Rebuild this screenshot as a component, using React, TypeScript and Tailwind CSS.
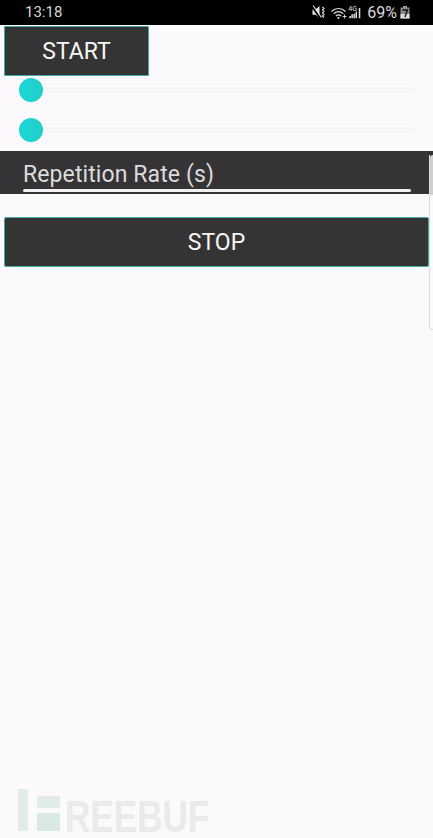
import React from 'react';

const font = "font-['Roboto','Liberation_Sans',sans-serif]";

function StatusIcons() {
  return (
    <div className="flex items-center">
      {/* muted */}
      <svg width="14" height="15" viewBox="0 0 14 15" className="mr-[4px]">
        <path d="M0.5 4.5h3L7.5 1v12L3.5 9.7H0.5z" fill="#e8e8e8" />
        <path d="M0 1.5l8.5 12" stroke="#000" strokeWidth="2" />
        <path d="M1 0.5l8.5 12" stroke="#e8e8e8" strokeWidth="1.1" />
        <path d="M10.5 2l1.5 1.5L10.5 5l1.5 1.5L10.5 8l1.5 1.5L10.5 11l1.5 1.5" stroke="#e8e8e8" strokeWidth="1.1" fill="none" />
      </svg>
      {/* wifi */}
      <svg width="18" height="14" viewBox="0 0 17 14">
        <path d="M1 5.5C5 1.5 11 1.5 15 5.5" stroke="#e0e0e0" strokeWidth="1.2" fill="none" />
        <path d="M3.2 7.8C6 5 10 5 12.8 7.8" stroke="#e0e0e0" strokeWidth="1.2" fill="none" />
        <path d="M5.4 10C7 8.4 9 8.4 10.6 10" stroke="#e0e0e0" strokeWidth="1.2" fill="none" />
        <circle cx="8" cy="12" r="1.1" fill="#e0e0e0" />
        <path d="M12 10.5h4M14 8.5v4" stroke="#e0e0e0" strokeWidth="0.9" />
      </svg>
      {/* 4G signal */}
      <div className="relative w-[14px] h-[14px] mr-[5px]">
        <span className="absolute left-0 top-[-1px] text-[7px] leading-[8px] text-[#e0e0e0]">4G</span>
        <svg width="14" height="14" viewBox="0 0 17 14" className="absolute left-0 top-0">
          <path d="M2.5 10.5v3M5 8.5v5M7.5 8v5.5M10 5.5v8M14 1v12.5" stroke="#e0e0e0" strokeWidth="1.8" />
        </svg>
      </div>
      <span className="text-[16px] leading-none text-[#dcdcdc] mr-[3px]">69%</span>
      {/* battery */}
      <svg width="10" height="13" viewBox="0 0 10 13">
        <rect x="3" y="0" width="4" height="2" fill="#9a9a9a" />
        <rect x="0.5" y="1.5" width="9" height="11" fill="#8a8a8a" />
        <rect x="0.5" y="8" width="9" height="4.5" fill="#dcdcdc" />
        <path d="M2.5 4h5L5 11" stroke="#111" strokeWidth="1.4" fill="none" />
      </svg>
    </div>
  );
}

function Slider() {
  return (
    <div className="h-10 flex items-center px-[19px]">
      <div className="w-6 h-6 rounded-full bg-gradient-to-r from-[#1bd6d6] to-[#22cfc9] shrink-0" />
      <div className="flex-1 h-[6px] bg-[#f6f5f7]" />
    </div>
  );
}

function DarkButton({ label, className }: { label: string; className: string }) {
  return (
    <button
      className={`h-[50px] pt-[2px] bg-[#353435] border border-[#3fa9a8] text-[#f7f7f7] flex items-center justify-center ${className}`}
    >
      {label}
    </button>
  );
}

export default function App() {
  return (
    <div className={`relative w-[433px] h-[838px] overflow-hidden bg-[#fbf9fc] ${font}`}>
      <div className="h-[25px] bg-black flex items-center justify-between pl-[25px] pr-[23px] text-[#d8d8d8]">
        <span className="text-[15px] leading-none">13:18</span>
        <StatusIcons />
      </div>

      <div className="pl-1 pt-px">
        <DarkButton label="START" className="w-[145px] text-[23px] rounded-[1px]" />
      </div>

      <div className="-mt-[6px]">
        <Slider />
        <Slider />
      </div>

      <div className="mt-[1px] h-[43px] bg-[#353335] px-[23px] pt-[10px]">
        <div className="text-[23px] leading-[28px] tracking-[0.1px] text-[#dcdcdc] whitespace-nowrap">Repetition Rate (s)</div>
        <div className="w-[388px] h-[3px] bg-[#f2f2f2] rounded-full" />
      </div>

      <div className="px-1 pt-[23px]">
        <DarkButton label="STOP" className="w-[425px] text-[23px] rounded-[2px]" />
      </div>

      {/* scroll panel peeking in on the right */}
      <div className="absolute right-0 top-[155px] w-1 h-[175px] border-l border-b border-[#dcdcdc] rounded-bl-[4px]">
        <div className="h-[40px] bg-[#d0d0d0] rounded-tl-[4px]" />
      </div>

      {/* watermark */}
      <div className="absolute left-[18px] top-[789px] flex items-end h-[42px]">
        <div className="w-[10px] h-[42px] bg-[#e1ece9]" />
        <div className="ml-[9px] w-[23px] h-[35px] flex flex-col gap-[5px]">
          <div className="h-[12px] bg-[#e1ece9]" />
          <div className="flex-1 bg-[#d9eae6]" />
        </div>
        <span className="ml-[5px] -mb-[2px] text-[45px] leading-[33px] font-bold text-[#ebe9ec] font-['Liberation_Sans',sans-serif] scale-x-[0.78] scale-y-[0.98] origin-left whitespace-nowrap">
          REEBUF
        </span>
      </div>
    </div>
  );
}
